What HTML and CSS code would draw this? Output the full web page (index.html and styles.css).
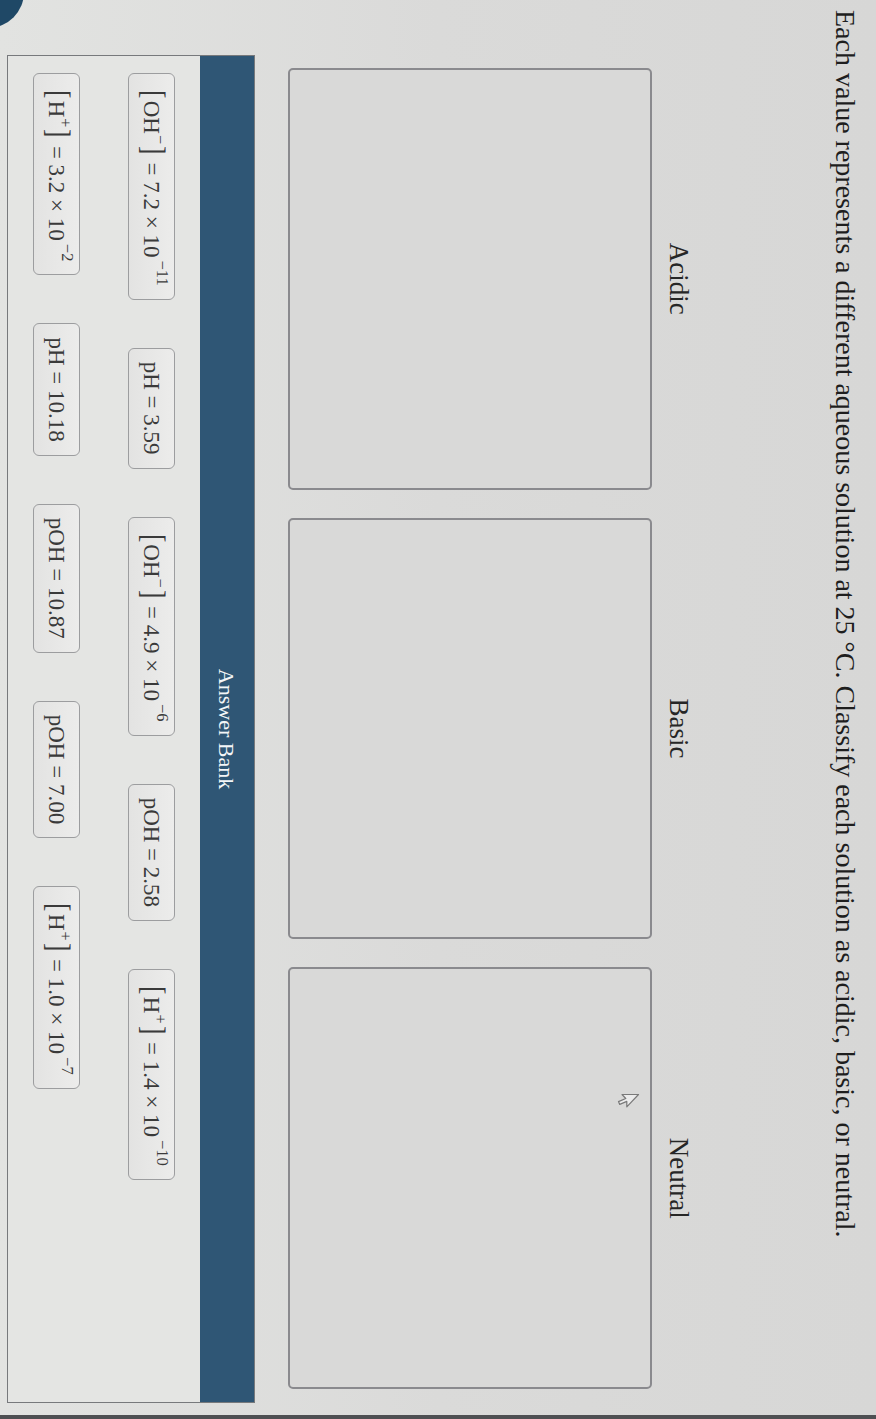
FILE: index.html
```html
<!DOCTYPE html>
<html>
<head>
<meta charset="utf-8">
<link rel="stylesheet" href="styles.css">
</head>
<body>
<div class="stage">
  <div class="dot"></div>
  <p class="prompt">Each value represents a different aqueous solution at 25&nbsp;°C. Classify each solution as acidic, basic, or neutral.</p>
  <div class="cats">
    <div class="cat"><div class="cat-label">Acidic</div><div class="bin"></div></div>
    <div class="cat"><div class="cat-label">Basic</div><div class="bin"></div></div>
    <div class="cat"><div class="cat-label">Neutral</div><div class="bin"></div></div>
  </div>
  <div class="bank">
    <div class="bank-head">Answer Bank</div>
    <div class="bank-body">
      <div class="bank-row">
        <div class="chip math"><span class="br">[</span>OH<span class="ion">−</span><span class="br">]</span>&nbsp;= 7.2 × 10<span class="exp">−11</span></div>
        <div class="chip">pH = 3.59</div>
        <div class="chip math"><span class="br">[</span>OH<span class="ion">−</span><span class="br">]</span>&nbsp;= 4.9 × 10<span class="exp">−6</span></div>
        <div class="chip">pOH = 2.58</div>
        <div class="chip math"><span class="br">[</span>H<span class="ion">+</span><span class="br">]</span>&nbsp;= 1.4 × 10<span class="exp">−10</span></div>
      </div>
      <div class="bank-row">
        <div class="chip math"><span class="br">[</span>H<span class="ion">+</span><span class="br">]</span>&nbsp;= 3.2 × 10<span class="exp">−2</span></div>
        <div class="chip">pH = 10.18</div>
        <div class="chip">pOH = 10.87</div>
        <div class="chip">pOH = 7.00</div>
        <div class="chip math"><span class="br">[</span>H<span class="ion">+</span><span class="br">]</span>&nbsp;= 1.0 × 10<span class="exp">−7</span></div>
      </div>
    </div>
  </div>
  <svg class="cursor" width="18" height="24" viewBox="0 0 18 24">
    <path d="M1.5 1.5 L1.5 18 L5.5 14.2 L8.6 21.5 L11.4 20.3 L8.4 13.2 L13.8 13.2 Z" fill="#ececec" stroke="#7a7a7a" stroke-width="1.2" stroke-linejoin="round"/>
  </svg>
</div>
</body>
</html>
```

FILE: styles.css
```css
html, body {
  margin: 0;
  padding: 0;
  overflow: hidden;
  width: 876px;
  height: 1419px;
  background: #dcdcdb;
}

.stage {
  position: relative;
  box-sizing: border-box;
  width: 1419px;
  height: 876px;
  overflow: hidden;
  transform-origin: 0 0;
  transform: translateX(876px) rotate(90deg);
  background: linear-gradient(to bottom, #d7d7d6 0%, #dadad9 50%, #e2e3e1 100%);
  border-right: 4px solid #4e4f52;
  font-family: "Liberation Serif", "Times New Roman", serif;
  color: #222;
}

.dot {
  position: absolute;
  left: -44px;
  top: 852px;
  width: 72px;
  height: 72px;
  border-radius: 50%;
  background: #1f4866;
}

.prompt {
  margin: 0;
  padding: 15px 0 0 10px;
  font-size: 28px;
  line-height: 32px;
  color: #1e1e1e;
  white-space: nowrap;
}

.cats {
  display: flex;
  gap: 28px;
  margin: 134px 0 0 68px;
  width: 1321px;
}

.cat {
  flex: 1 1 0;
  display: flex;
  flex-direction: column;
}

.cat-label {
  text-align: center;
  font-size: 27px;
  line-height: 32px;
  color: #262626;
}

.bin {
  margin-top: 11px;
  height: 364px;
  box-sizing: border-box;
  border: 2px solid #8a8a8e;
  border-radius: 5px;
  background: #d9d9d8;
}

.bank {
  margin: 33px 0 0 55px;
  width: 1348px;
  box-sizing: border-box;
  border: 1px solid #77797c;
  background: #e4e5e3;
}

.bank-head {
  height: 54px;
  line-height: 55px;
  background: #2f5675;
  color: #f4f6f8;
  text-align: center;
  font-size: 22px;
}

.bank-body {
  padding: 25px 17px 25px;
  display: flex;
  flex-direction: column;
  gap: 48px;
}

.bank-row {
  display: flex;
  gap: 48px;
}

.chip {
  height: 47px;
  box-sizing: border-box;
  padding: 0 13px;
  display: flex;
  align-items: center;
  white-space: nowrap;
  border: 1px solid #9c9d9f;
  border-radius: 6px;
  background: linear-gradient(to bottom, #ececeb, #e3e3e2);
  font-size: 23px;
  color: #3a3a3a;
}

.chip.math {
  padding: 0 13px 0 14px;
}

.exp {
  font-size: 0.72em;
  position: relative;
  top: -0.62em;
  margin-left: 3px;
}

.ion {
  font-size: 0.7em;
  position: relative;
  top: -0.55em;
  margin-left: 1px;
}

.br {
  font-size: 1.4em;
  display: inline-block;
  transform: scaleX(0.75);
  position: relative;
  top: -0.06em;
  margin: 0 1px;
}

.cursor {
  position: absolute;
  left: 1093px;
  top: 236px;
}
```
